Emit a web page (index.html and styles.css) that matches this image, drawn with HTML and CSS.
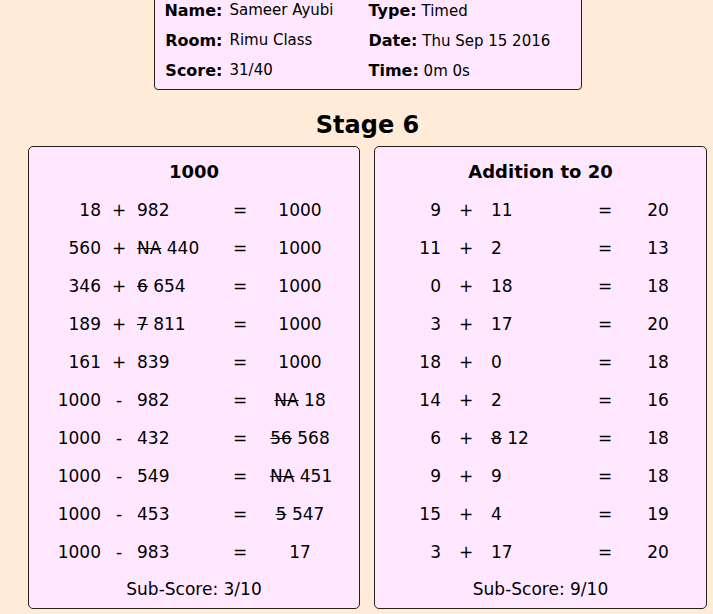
FILE: index.html
```html
<!DOCTYPE html>
<html>
<head>
<meta charset="utf-8">
<link rel="stylesheet" href="styles.css">
</head>
<body>
<div class="page">
  <div class="info">
    <div class="info-grid">
      <div class="lbl">Name:</div><div class="val">Sameer Ayubi</div>
      <div class="cell"><b>Type:</b> Timed</div>
      <div class="lbl">Room:</div><div class="val">Rimu Class</div>
      <div class="cell"><b>Date:</b> Thu Sep 15 2016</div>
      <div class="lbl">Score:</div><div class="val">31/40</div>
      <div class="cell"><b>Time:</b> 0m 0s</div>
    </div>
  </div>
  <h1 class="stage">Stage 6</h1>
  <div class="cards">
    <div class="card">
      <div class="card-title">1000</div>
      <div class="eqs eqs-left">
        <span class="a">18</span><span class="op">+</span><span class="b">982</span><span class="eq">=</span><span class="r">1000</span>
        <span class="a">560</span><span class="op">+</span><span class="b"><s>NA</s> 440</span><span class="eq">=</span><span class="r">1000</span>
        <span class="a">346</span><span class="op">+</span><span class="b"><s>6</s> 654</span><span class="eq">=</span><span class="r">1000</span>
        <span class="a">189</span><span class="op">+</span><span class="b"><s>7</s> 811</span><span class="eq">=</span><span class="r">1000</span>
        <span class="a">161</span><span class="op">+</span><span class="b">839</span><span class="eq">=</span><span class="r">1000</span>
        <span class="a">1000</span><span class="op">-</span><span class="b">982</span><span class="eq">=</span><span class="r"><s>NA</s> 18</span>
        <span class="a">1000</span><span class="op">-</span><span class="b">432</span><span class="eq">=</span><span class="r"><s>56</s> 568</span>
        <span class="a">1000</span><span class="op">-</span><span class="b">549</span><span class="eq">=</span><span class="r"><s>NA</s> 451</span>
        <span class="a">1000</span><span class="op">-</span><span class="b">453</span><span class="eq">=</span><span class="r"><s>5</s> 547</span>
        <span class="a">1000</span><span class="op">-</span><span class="b">983</span><span class="eq">=</span><span class="r">17</span>
      </div>
      <div class="sub">Sub-Score: 3/10</div>
    </div>
    <div class="card">
      <div class="card-title">Addition to 20</div>
      <div class="eqs eqs-right">
        <span class="a">9</span><span class="op">+</span><span class="b">11</span><span class="eq">=</span><span class="r">20</span>
        <span class="a">11</span><span class="op">+</span><span class="b">2</span><span class="eq">=</span><span class="r">13</span>
        <span class="a">0</span><span class="op">+</span><span class="b">18</span><span class="eq">=</span><span class="r">18</span>
        <span class="a">3</span><span class="op">+</span><span class="b">17</span><span class="eq">=</span><span class="r">20</span>
        <span class="a">18</span><span class="op">+</span><span class="b">0</span><span class="eq">=</span><span class="r">18</span>
        <span class="a">14</span><span class="op">+</span><span class="b">2</span><span class="eq">=</span><span class="r">16</span>
        <span class="a">6</span><span class="op">+</span><span class="b"><s>8</s> 12</span><span class="eq">=</span><span class="r">18</span>
        <span class="a">9</span><span class="op">+</span><span class="b">9</span><span class="eq">=</span><span class="r">18</span>
        <span class="a">15</span><span class="op">+</span><span class="b">4</span><span class="eq">=</span><span class="r">19</span>
        <span class="a">3</span><span class="op">+</span><span class="b">17</span><span class="eq">=</span><span class="r">20</span>
      </div>
      <div class="sub">Sub-Score: 9/10</div>
    </div>
  </div>
</div>
</body>
</html>
```

FILE: styles.css
```css
html, body {
  margin: 0;
  padding: 0;
  background: #ffebd7;
  color: #000;
  font-family: "Comic Sans MS", "DejaVu Sans", sans-serif;
  overflow: hidden;
}
.page {
  width: 679px;
  margin-left: 28px;
}
.info {
  width: 426px;
  margin: -9px auto 0;
  padding: 3px 0 4px;
  background: #ffe8ff;
  border: 1px solid #222;
  border-radius: 0 0 4px 4px;
  box-sizing: content-box;
}
.info-grid {
  display: grid;
  grid-template-columns: 68px 146px auto;
  grid-auto-rows: 30px;
  align-items: center;
  font-size: 16px;
}
.info-grid .lbl {
  font-weight: bold;
  text-align: right;
}
.info-grid .val {
  font-size: 15px;
  padding-left: 7px;
}
.info-grid .cell {
  font-size: 15px;
}
.info-grid .cell b {
  font-size: 16px;
}
.stage {
  margin: 0;
  padding-top: 21px;
  height: 35px;
  line-height: 28px;
  text-align: center;
  font-size: 24px;
  font-weight: bold;
}
.cards {
  display: flex;
  gap: 14px;
}
.card {
  width: 332px;
  box-sizing: border-box;
  background: #ffe8ff;
  border: 1px solid #222;
  border-radius: 5px;
  padding: 6px 0 0;
}
.card + .card {
  width: 333px;
}
.card-title {
  height: 38px;
  line-height: 38px;
  text-align: center;
  font-size: 18px;
  font-weight: bold;
}
.eqs {
  display: grid;
  grid-auto-rows: 38px;
  align-items: center;
  font-size: 17px;
}
.eqs-left {
  grid-template-columns: 72px 36px 73px 60px 60px 1fr;
}
.eqs-right {
  grid-template-columns: 66px 50px 84px 60px 46px 1fr;
}
.eqs .a { grid-column: 1; text-align: right; }
.eqs .op { grid-column: 2; text-align: center; }
.eqs .b { grid-column: 3; text-align: left; white-space: nowrap; }
.eqs .eq { grid-column: 4; text-align: center; }
.eqs .r { grid-column: 5; text-align: center; white-space: nowrap; }
.eqs s {
  text-decoration-thickness: 1px;
}
.sub {
  height: 37px;
  line-height: 37px;
  text-align: center;
  font-size: 17px;
}
```
